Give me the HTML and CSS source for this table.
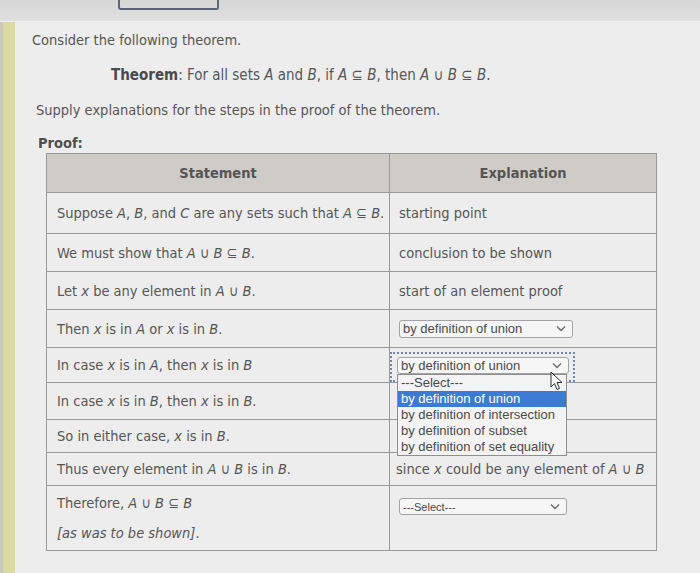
FILE: index.html
```html
<!DOCTYPE html>
<html>
<head>
<meta charset="utf-8">
<link rel="stylesheet" href="styles.css">
</head>
<body>
<div class="topbar"><div class="tab"></div></div>
<div class="main">
  <div class="edge"></div>
  <div class="panel">
    <p class="intro">Consider the following theorem.</p>
    <p class="theorem"><b>Theorem</b>: For all sets <i>A</i> and <i>B</i>, if <i>A</i> ⊆ <i>B</i>, then <i>A</i> ∪ <i>B</i> ⊆ <i>B</i>.</p>
    <p class="supply">Supply explanations for the steps in the proof of the theorem.</p>
    <p class="proof-label">Proof:</p>
    <table class="proof">
      <colgroup><col class="c1"><col class="c2"></colgroup>
      <tr class="head"><th>Statement</th><th>Explanation</th></tr>
      <tr class="r1"><td>Suppose <i>A</i>, <i>B</i>, and <i>C</i> are any sets such that <i>A</i> ⊆ <i>B</i>.</td><td>starting point</td></tr>
      <tr class="r2"><td>We must show that <i>A</i> ∪ <i>B</i> ⊆ <i>B</i>.</td><td>conclusion to be shown</td></tr>
      <tr class="r3"><td>Let <i>x</i> be any element in <i>A</i> ∪ <i>B</i>.</td><td>start of an element proof</td></tr>
      <tr class="r4"><td>Then <i>x</i> is in <i>A</i> or <i>x</i> is in <i>B</i>.</td><td>
        <div class="select"><span class="val">by definition of union</span><svg class="chev" width="10" height="7" viewBox="0 0 10 7"><path d="M1 1.5 L5 5.5 L9 1.5" fill="none" stroke="#6b6b6b" stroke-width="1.4"/></svg></div>
      </td></tr>
      <tr class="r5"><td>In case <i>x</i> is in <i>A</i>, then <i>x</i> is in <i>B</i></td><td class="focus-cell">
        <div class="focus">
          <div class="select open"><span class="val">by definition of union</span><svg class="chev" width="10" height="7" viewBox="0 0 10 7"><path d="M1 1.5 L5 5.5 L9 1.5" fill="none" stroke="#6b6b6b" stroke-width="1.4"/></svg></div>
          <ul class="menu">
            <li>---Select---</li>
            <li class="sel">by definition of union</li>
            <li>by definition of intersection</li>
            <li>by definition of subset</li>
            <li>by definition of set equality</li>
          </ul>
          <svg class="cursor" width="13" height="20" viewBox="0 0 13 20"><path d="M1 1 L1 16 L4.5 12.5 L7 18.5 L9.5 17.5 L7 11.5 L12 11.5 Z" fill="#fafafa" stroke="#333" stroke-width="1" stroke-linejoin="round"/></svg>
        </div>
      </td></tr>
      <tr class="r6"><td>In case <i>x</i> is in <i>B</i>, then <i>x</i> is in <i>B</i>.</td><td></td></tr>
      <tr class="r7"><td>So in either case, <i>x</i> is in <i>B</i>.</td><td></td></tr>
      <tr class="r8"><td>Thus every element in <i>A</i> ∪ <i>B</i> is in <i>B</i>.</td><td class="since">since <i>x</i> could be any element of <i>A</i> ∪ <i>B</i></td></tr>
      <tr class="r9"><td><div>Therefore, <i>A</i> ∪ <i>B</i> ⊆ <i>B</i></div><div class="shown"><i>[as was to be shown]</i>.</div></td><td>
        <div class="select small"><span class="val">---Select---</span><svg class="chev" width="10" height="7" viewBox="0 0 10 7"><path d="M1 1.5 L5 5.5 L9 1.5" fill="none" stroke="#6b6b6b" stroke-width="1.4"/></svg></div>
      </td></tr>
    </table>
  </div>
</div>
</body>
</html>
```
FILE: styles.css
```css
html, body {
  margin: 0;
  padding: 0;
}
body {
  width: 700px;
  height: 573px;
  overflow: hidden;
  background: #e9e9e9;
  font-family: "DejaVu Sans Condensed", "DejaVu Sans", sans-serif;
  font-stretch: condensed;
  font-size: 14.5px;
  color: #565656;
}
.topbar {
  height: 21px;
  background: linear-gradient(#d6d6d6, #e0e0e0);
  border-bottom: 1px solid #f0f0f0;
}
.tab {
  margin-left: 118px;
  width: 97px;
  height: 8px;
  border: 2px solid #5b6479;
  border-top: none;
  border-radius: 0 0 3px 3px;
}
.main {
  display: flex;
  height: 551px;
}
.edge {
  width: 12px;
  background: #dbdaa3;
  border-left: 3px solid #c8c8c0;
}
.panel {
  flex: 1;
  background: #ededed;
  padding-top: 8px;
}
.panel p {
  margin: 0;
  line-height: 20px;
}
.intro {
  padding-left: 17px;
}
.theorem {
  margin-top: 15px !important;
  padding-left: 96px;
  font-size: 15px;
}
.theorem b {
  color: #4a4a4a;
}
.supply {
  margin-top: 15px !important;
  padding-left: 21px;
}
.proof-label {
  margin-top: 13px !important;
  padding-left: 23px;
  font-weight: bold;
  color: #4e4e4e;
}
.proof {
  margin-left: 31px;
  border-collapse: collapse;
  width: 610px;
  table-layout: fixed;
}
.c1 { width: 343px; }
.c2 { width: 267px; }
.proof th, .proof td {
  border: 1px solid #999;
  padding: 0 0 0 10px;
  text-align: left;
  vertical-align: middle;
  white-space: nowrap;
  font-weight: normal;
}
.proof td + td {
  padding-left: 9px;
}
.proof th {
  background: #cfcbc6;
  font-weight: bold;
  color: #555;
  text-align: center;
  padding: 0;
}
.head { height: 39px; }
.r1 { height: 41px; }
.r2 { height: 38px; }
.r3 { height: 38px; }
.r4 { height: 38px; }
.r5 { height: 35px; }
.r6 { height: 37px; }
.r7 { height: 33px; }
.r8 { height: 33px; }
.r9 { height: 65px; }
.r9 td {
  vertical-align: top;
  padding-top: 8px;
}
.r9 td div {
  line-height: 18px;
}
.r9 .shown {
  margin-top: 12px;
}
.since {
  padding-left: 6px !important;
}
.select {
  display: flex;
  align-items: center;
  justify-content: space-between;
  box-sizing: border-box;
  width: 174px;
  height: 18px;
  border: 1px solid #a3a3a3;
  border-radius: 3px;
  background: #f6f6f6;
  padding: 0 6px 0 3px;
  font-family: "Liberation Sans", Arial, sans-serif;
  font-size: 13px;
  color: #4a4a4a;
}
.select.small {
  width: 168px;
  height: 17px;
  margin-top: 4px;
  font-size: 11px;
}
.chev {
  flex: none;
}
.r5 .focus-cell {
  padding: 4px 0 0 0;
  vertical-align: top;
}
.focus {
  position: relative;
  box-sizing: border-box;
  width: 185px;
  height: 30px;
  padding: 3px 0 0 5px;
  border: 2px dotted #6f86ad;
}
.select.open {
  width: 172px;
  height: 17px;
}
.menu {
  position: absolute;
  left: 5px;
  top: 20px;
  z-index: 2;
  margin: 0;
  padding: 0;
  list-style: none;
  width: 168px;
  background: #f3f3f3;
  border: 1px solid #8e8e8e;
  font-family: "Liberation Sans", Arial, sans-serif;
  font-size: 13px;
  color: #4a4a4a;
}
.menu li {
  height: 16px;
  line-height: 16px;
  padding-left: 3px;
}
.menu li.sel {
  background: #3b7bd6;
  color: #fff;
}
.cursor {
  position: absolute;
  left: 158px;
  top: 17px;
  z-index: 3;
}
```
